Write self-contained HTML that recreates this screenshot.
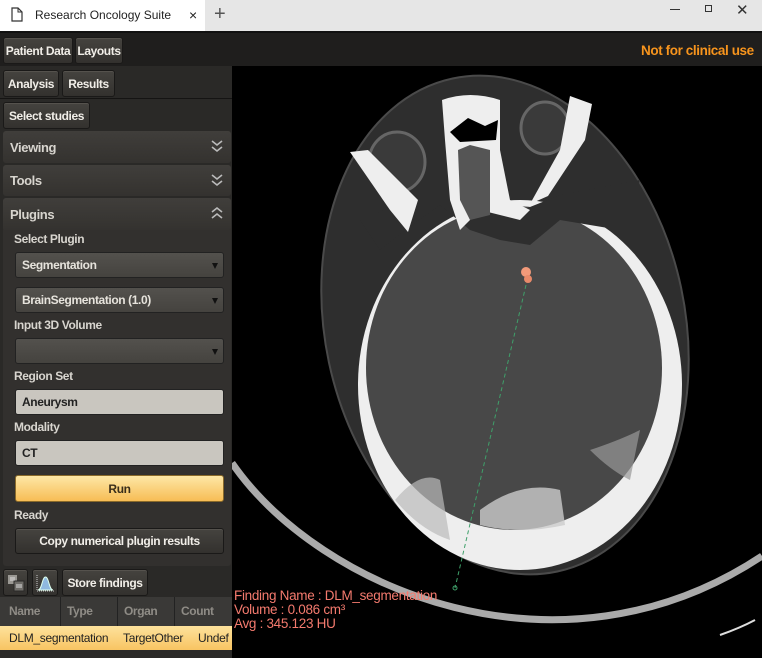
<!DOCTYPE html>
<html><head><meta charset="utf-8"><style>
*{box-sizing:border-box;margin:0;padding:0}
body{width:762px;height:658px;overflow:hidden;background:#000;font-family:"Liberation Sans",sans-serif;font-weight:bold;font-size:12px;letter-spacing:-0.4px;color:#e6e3dc;position:relative;white-space:nowrap}
.a{position:absolute}
.btn{position:absolute;background:linear-gradient(#45433f,#33312e);border:1px solid #1a1918;border-radius:3px;color:#f1eee8;display:flex;align-items:center;justify-content:center;box-shadow:inset 0 1px 0 #55524d}
.hdr{position:absolute;left:3px;width:228px;background:linear-gradient(#403e3b,#34322f);border-radius:3px;color:#d8d5cf;padding-left:7px;display:flex;align-items:center;font-size:13px}
.chev{position:absolute;right:8px;top:8px}
.lbl{position:absolute;left:14px;color:#d8d5cf}
.dd{position:absolute;left:15px;width:209px;height:26px;background:linear-gradient(#53514d,#45433f);border:1px solid #222;border-radius:3px;color:#e6e3dc;padding-left:6px;display:flex;align-items:center}
.dd:after{content:"";position:absolute;right:5px;top:10px;border-left:3.5px solid transparent;border-right:3.5px solid transparent;border-top:6px solid #111}
.tf{position:absolute;left:15px;width:209px;height:26px;background:#c9c6bf;border:1px solid #222;border-radius:3px;color:#222;padding-left:6px;display:flex;align-items:center}
</style></head><body>
<div class="a" style="left:0;top:0;width:762px;height:31px;background:#e6e6e6"></div>
<div class="a" style="left:0;top:0;width:205px;height:31px;background:#fff;font-weight:normal;font-size:12px;letter-spacing:0;color:#222">
 <svg class="a" style="left:11px;top:7px" width="12" height="15" viewBox="0 0 12 15"><path d="M1 1h6l4 4v9H1z" fill="none" stroke="#333" stroke-width="1.2"/><path d="M7 1v4h4" fill="none" stroke="#333" stroke-width="1"/></svg>
 <span class="a" style="left:35px;top:8px">Research Oncology Suite</span>
 <span class="a" style="left:189px;top:7px;font-size:14px">×</span>
</div>
<span class="a" style="left:214px;top:3px;font-weight:normal;font-size:20px;color:#555">+</span>
<div class="a" style="left:670px;top:9px;width:10px;height:1px;background:#333"></div>
<div class="a" style="left:705px;top:5px;width:7px;height:7px;border:1px solid #333"></div>
<span class="a" style="left:736px;top:1px;font-weight:normal;font-size:15px;color:#333">✕</span>
<div class="a" style="left:0;top:31px;width:762px;height:35px;background:#1f1e1d;border-top:2px solid #111"></div>
<div class="btn" style="left:3px;top:37px;width:70px;height:27px">Patient Data</div>
<div class="btn" style="left:75px;top:37px;width:48px;height:27px">Layouts</div>
<div class="a" style="left:641px;top:43px;color:#f7941d;font-size:13.5px">Not for clinical use</div>
<div class="a" style="left:0;top:66px;width:232px;height:592px;background:#2a2927"></div>
<div class="btn" style="left:3px;top:70px;width:56px;height:27px">Analysis</div>
<div class="btn" style="left:62px;top:70px;width:53px;height:27px">Results</div>
<div class="a" style="left:0;top:98px;width:232px;height:1px;background:#151413"></div>
<div class="btn" style="left:3px;top:102px;width:87px;height:27px">Select studies</div>
<div class="hdr" style="top:131px;height:32px">Viewing<svg class="chev" width="12" height="14" viewBox="0 0 12 14"><path d="M1 2l5 4 5-4M1 8l5 4 5-4" fill="none" stroke="#bbb" stroke-width="1.6"/></svg></div>
<div class="hdr" style="top:165px;height:31px">Tools<svg class="chev" width="12" height="14" viewBox="0 0 12 14"><path d="M1 2l5 4 5-4M1 8l5 4 5-4" fill="none" stroke="#bbb" stroke-width="1.6"/></svg></div>
<div class="a" style="left:3px;top:198px;width:228px;height:368px;background:#32302e;border-radius:3px"></div>
<div class="hdr" style="top:198px;height:32px">Plugins<svg class="chev" width="12" height="14" viewBox="0 0 12 14"><path d="M1 6l5-4 5 4M1 12l5-4 5 4" fill="none" stroke="#bbb" stroke-width="1.6"/></svg></div>
<div class="lbl" style="top:232px">Select Plugin</div>
<div class="dd" style="top:252px">Segmentation</div>
<div class="dd" style="top:287px">BrainSegmentation (1.0)</div>
<div class="lbl" style="top:318px">Input 3D Volume</div>
<div class="dd" style="top:338px"></div>
<div class="lbl" style="top:369px">Region Set</div>
<div class="tf" style="top:389px">Aneurysm</div>
<div class="lbl" style="top:420px">Modality</div>
<div class="tf" style="top:440px">CT</div>
<div class="a" style="left:15px;top:475px;width:209px;height:27px;background:linear-gradient(#fde7a6,#f7bd55);border:1px solid #8a6a2a;border-radius:3px;color:#3a2e1a;display:flex;align-items:center;justify-content:center">Run</div>
<div class="lbl" style="top:508px">Ready</div>
<div class="btn" style="left:15px;top:528px;width:209px;height:26px">Copy numerical plugin results</div>
<div class="btn" style="left:3px;top:569px;width:25px;height:27px"><svg width="18" height="18" viewBox="0 0 18 18"><rect x="1" y="1" width="9" height="9" fill="#9a9893"/><rect x="7" y="7" width="10" height="10" fill="#6f6d69" stroke="#2a2927"/><path d="M3 4h5M3 6h5M9 11h6M9 13h6" stroke="#ddd" stroke-width="1"/></svg></div>
<div class="btn" style="left:32px;top:569px;width:26px;height:27px"><svg width="20" height="20" viewBox="0 0 20 20"><path d="M2 2v16h17" fill="none" stroke="#ccc" stroke-dasharray="1 1"/><path d="M3 17C7 17 7 4 10.5 4S14 17 18 17z" fill="#8fb9e0" stroke="#dfe"/></svg></div>
<div class="btn" style="left:62px;top:569px;width:86px;height:27px">Store findings</div>
<div class="a" style="left:0;top:597px;width:232px;height:29px;background:#3a3937;color:#8f8c86">
 <span class="a" style="left:9px;top:7px">Name</span><span class="a" style="left:67px;top:7px">Type</span><span class="a" style="left:124px;top:7px">Organ</span><span class="a" style="left:181px;top:7px">Count</span>
 <div class="a" style="left:60px;top:0;width:1px;height:29px;background:#222"></div><div class="a" style="left:117px;top:0;width:1px;height:29px;background:#222"></div><div class="a" style="left:174px;top:0;width:1px;height:29px;background:#222"></div>
</div>
<div class="a" style="left:0;top:626px;width:232px;height:24px;background:linear-gradient(#fde29c,#f8c462);color:#222;overflow:hidden;font-weight:normal;letter-spacing:-0.3px">
 <span class="a" style="left:9px;top:5px">DLM_segmentation</span><span class="a" style="left:123px;top:5px">TargetOther</span><span class="a" style="left:198px;top:5px">Undef</span>
</div>
<svg class="a" style="left:232px;top:66px" width="530" height="592" viewBox="232 66 530 592">
 <rect x="232" y="66" width="530" height="592" fill="#000"/>
 <path d="M232 463 C 320 590, 560 690, 762 556" fill="none" stroke="#aaa" stroke-width="7"/>
 <path d="M720 635 Q 740 628 755 620" fill="none" stroke="#ddd" stroke-width="2"/>
 <ellipse cx="505" cy="325" rx="180" ry="252" transform="rotate(-12 505 325)" fill="#2e2e2e" stroke="#4a4a4a" stroke-width="2"/>
 <ellipse cx="520" cy="385" rx="162" ry="185" fill="#eee"/>
 <ellipse cx="514" cy="368" rx="148" ry="162" fill="#484848"/>
 <path d="M395 500 Q 420 470 440 480 L450 540 Q 420 530 395 500Z" fill="#bbb" opacity=".7"/>
 <path d="M480 510 Q 520 480 560 490 L565 525 Q 520 535 480 525Z" fill="#ccc" opacity=".8"/>
 <path d="M590 450 Q 620 440 640 430 L630 480 Q 610 470 590 450Z" fill="#999" opacity=".7"/>
 <path d="M360 220 L420 195 L480 205 L510 215 L560 195 L640 180 L620 230 L560 220 L530 245 L500 240 L470 230 L440 205 L405 230 L380 250Z" fill="#2e2e2e"/>
 <ellipse cx="397" cy="162" rx="28" ry="30" fill="#3a3a3a" stroke="#666" stroke-width="3"/>
 <ellipse cx="545" cy="128" rx="24" ry="26" fill="#3a3a3a" stroke="#666" stroke-width="3"/>
 <path d="M350 152 L368 150 L418 200 L408 232 L390 210Z" fill="#eee"/>
 <path d="M570 96 L592 104 L585 140 L548 196 L530 204 L560 150Z" fill="#eee"/>
 <path d="M442 100 Q 470 90 500 100 L500 150 L510 200 L530 210 L520 220 L500 215 L480 210 L460 230 L450 200 L445 140Z" fill="#eee"/>
 <path d="M450 132 L468 118 L485 126 L498 120 L496 140 L460 142 Z" fill="#000"/>
 <path d="M458 150 L470 145 L490 150 L490 215 L470 220 L460 200Z" fill="#555"/>
 <circle cx="526" cy="272" r="5" fill="#f29a7a"/><circle cx="528" cy="279" r="4" fill="#e88a6a"/>
 <line x1="526" y1="285" x2="455" y2="588" stroke="#3fa06a" stroke-dasharray="4 3" stroke-width="1"/>
 <circle cx="455" cy="588" r="2" fill="none" stroke="#3fa06a"/>
 <g font-family="Liberation Sans, sans-serif" font-size="13.5" fill="#f47a6e" font-weight="normal" letter-spacing="-0.3">
  <text x="234" y="600">Finding Name : DLM_segmentation</text>
  <text x="234" y="614">Volume : 0.086 cm³</text>
  <text x="234" y="628">Avg : 345.123 HU</text>
 </g>
</svg>
</body></html>
